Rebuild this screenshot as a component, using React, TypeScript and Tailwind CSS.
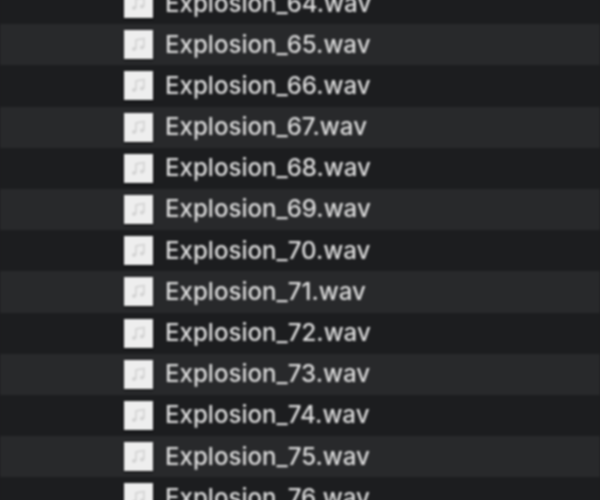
const rows = [64, 65, 66, 67, 68, 69, 70, 71, 72, 73, 74, 75, 76];

function AudioIcon() {
  return (
    <div className="flex h-[29px] w-[29px] shrink-0 items-center justify-center bg-[#eeeeee] shadow-[0_1px_2px_rgba(0,0,0,0.8)]">
      <svg width="17" height="17" viewBox="0 0 17 17" fill="none" stroke="#d2d2d2" strokeWidth="1.6">
        <path d="M6 13V4l8-1.500V11.500" />
        <circle cx="4" cy="13" r="2" fill="#d2d2d2" stroke="none" />
        <circle cx="12" cy="11.500" r="2" fill="#d2d2d2" stroke="none" />
      </svg>
    </div>
  );
}

export default function App() {
  return (
    <div className="h-[500px] w-[600px] overflow-hidden bg-[#1c1d1f]">
      <div className="-mt-[17px] blur-[0.8px]">
        {rows.map((n, i) => (
          <div
            key={n}
            className={`flex h-[41.2px] items-center gap-[12px] pl-[124px] ${i % 2 === 1 ? 'bg-[#28292b]' : 'bg-[#1c1d1f]'}`}
          >
            <AudioIcon />
            <span className="font-['Inter',sans-serif] text-[24.1px] leading-none font-medium text-[#dcdcdc]">
              Explosion_{n}.wav
            </span>
          </div>
        ))}
      </div>
    </div>
  );
}
